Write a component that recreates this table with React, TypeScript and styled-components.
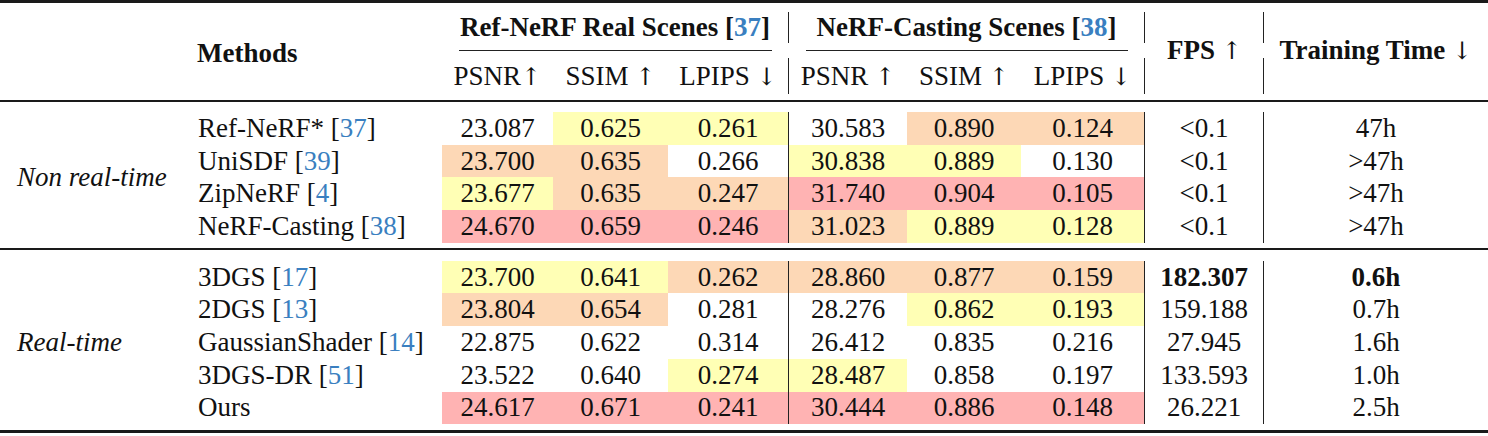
import React from 'react'
import styled, { createGlobalStyle } from 'styled-components'

type Tone = 'r' | 'o' | 'y' | ''

type Row = {
    name: string
    cite: string
    cells: [string, Tone][]
    fps: string
    time: string
    best?: boolean
}

const toneColor: Record<Tone, string> = {
    r: '#ffb3b3',
    o: '#fdd8b6',
    y: '#ffffb5',
    '': 'transparent',
}

const serif = '"Liberation Serif", "DejaVu Serif", "Times New Roman", serif'

const GlobalStyle = createGlobalStyle`
  html, body {
    margin: 0;
    padding: 0;
    background: #fff;
  }
  body {
    font-family: ${serif};
    color: #111;
  }
`

const Table = styled.table`
  width: 1488px;
  table-layout: fixed;
  border-collapse: separate;
  border-spacing: 0;
  font-family: ${serif};
  font-size: 27px;
  line-height: 1;
  color: #111;
`

const Space = styled.td<{ $h: number }>`
  height: ${p => p.$h}px;
  padding: 0;
`

const Rule = styled.td<{ $h: number }>`
  height: ${p => p.$h}px;
  padding: 0;
  background: #1a1a1a;
`

const HeadRow = styled.tr<{ $h: number }>`
  height: ${p => p.$h}px;
`

const GroupHead = styled.td<{ $line?: boolean }>`
  padding: 0;
  text-align: center;
  font-weight: bold;
  white-space: nowrap;
  border-right: ${p => (p.$line ? '1px solid #222' : 'none')};
`

const MethodsHead = styled.td`
  padding: 0 0 0 12px;
  font-weight: bold;
  text-align: left;
  vertical-align: middle;
`

const CmidCell = styled.td`
  padding: 0 17px;
  vertical-align: middle;
`

const CmidLine = styled.div`
  height: 1px;
  background: #222;
`

const SpanHead = styled.td<{ $line?: boolean }>`
  padding: 0;
  height: 15px;
  line-height: 15px;
  text-align: center;
  font-weight: bold;
  white-space: nowrap;
  border-right: ${p => (p.$line ? '1px solid #222' : 'none')};
`

const SubHead = styled.td<{ $line?: boolean }>`
  padding: 0;
  text-align: center;
  white-space: nowrap;
  border-right: ${p => (p.$line ? '1px solid #222' : 'none')};
`

const Blank = styled.td<{ $line?: boolean }>`
  padding: 0;
  border-right: ${p => (p.$line ? '1px solid #222' : 'none')};
`

const Arrow = styled.span`
  font-family: "DejaVu Serif", serif;
  font-size: 0.9em;
  font-weight: normal;
  font-variant-emoji: text;
  color: #111;
`

const Cite = styled.span`
  color: #3a7fc0;
`

const DataRow = styled.tr`
  height: 32.7px;
`

const Category = styled.td`
  padding: 0 0 0 17px;
  font-style: italic;
  white-space: nowrap;
  vertical-align: middle;
`

const Method = styled.td`
  padding: 0 0 0 13px;
  white-space: nowrap;
  text-align: left;
`

const Value = styled.td<{ $tone: Tone; $line?: boolean; $bold?: boolean }>`
  padding: 0;
  text-align: center;
  white-space: nowrap;
  background: ${p => toneColor[p.$tone]};
  font-weight: ${p => (p.$bold ? 'bold' : 'normal')};
  border-right: ${p => (p.$line ? '1px solid #222' : 'none')};
`

const widths = [185, 257, 111, 115, 121, 118, 114, 124, 119, 224]

const UP = '\u2191\uFE0E'
const DOWN = '\u2193\uFE0E'

const nonRealTime: Row[] = [
    { name: 'Ref-NeRF*', cite: '37', cells: [['23.087', ''], ['0.625', 'y'], ['0.261', 'y'], ['30.583', ''], ['0.890', 'o'], ['0.124', 'o']], fps: '<0.1', time: '47h' },
    { name: 'UniSDF', cite: '39', cells: [['23.700', 'o'], ['0.635', 'o'], ['0.266', ''], ['30.838', 'y'], ['0.889', 'y'], ['0.130', '']], fps: '<0.1', time: '>47h' },
    { name: 'ZipNeRF', cite: '4', cells: [['23.677', 'y'], ['0.635', 'o'], ['0.247', 'o'], ['31.740', 'r'], ['0.904', 'r'], ['0.105', 'r']], fps: '<0.1', time: '>47h' },
    { name: 'NeRF-Casting', cite: '38', cells: [['24.670', 'r'], ['0.659', 'r'], ['0.246', 'r'], ['31.023', 'o'], ['0.889', 'y'], ['0.128', 'y']], fps: '<0.1', time: '>47h' },
]

const realTime: Row[] = [
    { name: '3DGS', cite: '17', cells: [['23.700', 'y'], ['0.641', 'y'], ['0.262', 'o'], ['28.860', 'o'], ['0.877', 'o'], ['0.159', 'o']], fps: '182.307', time: '0.6h', best: true },
    { name: '2DGS', cite: '13', cells: [['23.804', 'o'], ['0.654', 'o'], ['0.281', ''], ['28.276', ''], ['0.862', 'y'], ['0.193', 'y']], fps: '159.188', time: '0.7h' },
    { name: 'GaussianShader', cite: '14', cells: [['22.875', ''], ['0.622', ''], ['0.314', ''], ['26.412', ''], ['0.835', ''], ['0.216', '']], fps: '27.945', time: '1.6h' },
    { name: '3DGS-DR', cite: '51', cells: [['23.522', ''], ['0.640', ''], ['0.274', 'y'], ['28.487', 'y'], ['0.858', ''], ['0.197', '']], fps: '133.593', time: '1.0h' },
    { name: 'Ours', cite: '', cells: [['24.617', 'r'], ['0.671', 'r'], ['0.241', 'r'], ['30.444', 'r'], ['0.886', 'r'], ['0.148', 'r']], fps: '26.221', time: '2.5h' },
]

function Block({ label, rows }: { label: string; rows: Row[] }) {
    return (
        <>
            {rows.map((row, index) => (
                <DataRow key={index}>
                    {index === 0 && <Category rowSpan={rows.length}>{label}</Category>}
                    <Method>
                        {row.name}
                        {row.cite && (
                            <>
                                {' '}[<Cite>{row.cite}</Cite>]
                            </>
                        )}
                    </Method>
                    {row.cells.map(([value, tone], i) => (
                        <Value key={i} $tone={tone} $line={i === 2 || i === 5}>
                            {value}
                        </Value>
                    ))}
                    <Value $tone="" $line $bold={row.best}>{row.fps}</Value>
                    <Value $tone="" $bold={row.best}>{row.time}</Value>
                </DataRow>
            ))}
        </>
    )
}

export default function App() {
    return (
        <>
            <GlobalStyle />
            <Table>
                <colgroup>
                    {widths.map((w, i) => (
                        <col key={i} style={{ width: w }} />
                    ))}
                </colgroup>
                <tbody>
                    <tr><Rule colSpan={10} $h={3} /></tr>
                    <tr><Space colSpan={10} $h={9} /></tr>
                    <HeadRow $h={31}>
                        <Blank rowSpan={3} />
                        <MethodsHead rowSpan={3}>Methods</MethodsHead>
                        <GroupHead colSpan={3} $line>
                            Ref-NeRF Real Scenes [<Cite>37</Cite>]
                        </GroupHead>
                        <GroupHead colSpan={3} $line>
                            NeRF-Casting Scenes [<Cite>38</Cite>]
                        </GroupHead>
                        <Blank $line />
                        <Blank />
                    </HeadRow>
                    <HeadRow $h={15}>
                        <CmidCell colSpan={3}><CmidLine /></CmidCell>
                        <CmidCell colSpan={3}><CmidLine /></CmidCell>
                        <SpanHead>FPS <Arrow>{UP}</Arrow></SpanHead>
                        <SpanHead>Training Time <Arrow>{DOWN}</Arrow></SpanHead>
                    </HeadRow>
                    <HeadRow $h={36}>
                        <SubHead>PSNR<Arrow>{UP}</Arrow></SubHead>
                        <SubHead>SSIM <Arrow>{UP}</Arrow></SubHead>
                        <SubHead $line>LPIPS <Arrow>{DOWN}</Arrow></SubHead>
                        <SubHead>PSNR <Arrow>{UP}</Arrow></SubHead>
                        <SubHead>SSIM <Arrow>{UP}</Arrow></SubHead>
                        <SubHead $line>LPIPS <Arrow>{DOWN}</Arrow></SubHead>
                        <Blank $line />
                        <Blank />
                    </HeadRow>
                    <tr><Space colSpan={10} $h={6} /></tr>
                    <tr><Rule colSpan={10} $h={2} /></tr>
                    <tr><Space colSpan={10} $h={10} /></tr>
                    <Block label="Non real-time" rows={nonRealTime} />
                    <tr><Space colSpan={10} $h={5} /></tr>
                    <tr><Rule colSpan={10} $h={2} /></tr>
                    <tr><Space colSpan={10} $h={11} /></tr>
                    <Block label="Real-time" rows={realTime} />
                    <tr><Space colSpan={10} $h={6} /></tr>
                    <tr><Rule colSpan={10} $h={3} /></tr>
                </tbody>
            </Table>
        </>
    )
}
